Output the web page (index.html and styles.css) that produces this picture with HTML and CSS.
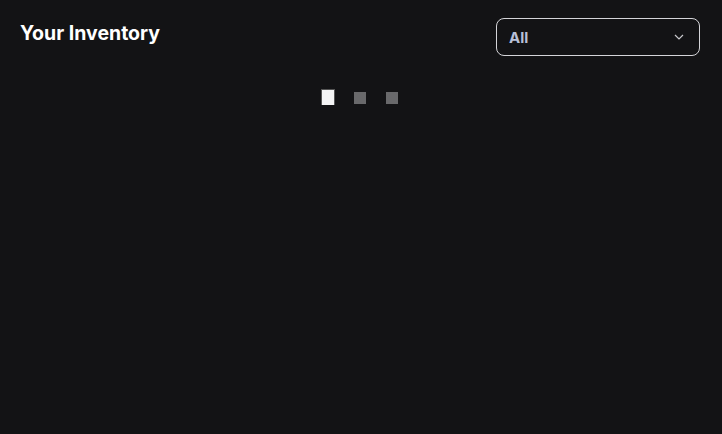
FILE: index.html
```html
<!DOCTYPE html>
<html lang="en">
<head>
  <meta charset="UTF-8">
  <title>Your Inventory</title>
  <link rel="stylesheet" href="styles.css">
</head>
<body>

  <!-- header: title + filter -->
  <div class="inv-header">
    <h1 class="inv-title">Your Inventory</h1>
    <div class="inv-select">
      <span class="inv-select-value">All</span>
      <svg class="inv-chevron" width="12" height="12" viewBox="0 0 12 12">
        <path d="M2 4 L6 8 L10 4" fill="none" stroke="#c8c8cc" stroke-width="1.2"/>
      </svg>
    </div>
  </div>

  <!-- loading indicator -->
  <div class="loader">
    <span class="loader-dot active"></span>
    <span class="loader-dot"></span>
    <span class="loader-dot"></span>
  </div>

</body>
</html>
```

FILE: styles.css
```css
/* page */
body {
  margin: 0;
  background-color: #131315;
  color: #fff;
  font-family: Inter, "Noto Sans", sans-serif;
}

.inv-header {
  display: flex;
  justify-content: space-between;
  align-items: flex-start;
  padding: 18px 22px 0 20px;
}

.inv-title {
  margin: 4px 0 0;
  font-size: 19.5px;
  font-weight: 700;
  line-height: 22px;
}

/* dropdown */
.inv-select {
  width: 204px;
  height: 38px;
  box-sizing: border-box;
  border: 1px solid #d4d4d8;
  border-radius: 8px;
  display: flex;
  align-items: center;
  justify-content: space-between;
  padding: 0 14px 0 12px;
}

.inv-select-value {
  color: #b8c0d8;
  font-size: 15px;
  font-weight: 700;
}

/* loader squares */
.loader {
  display: flex;
  justify-content: center;
  align-items: center;
  gap: 20px;
  margin-top: 34px;
  padding-right: 2px;
}

.loader-dot {
  width: 12px;
  height: 12px;
  background: #69696b;
}

.loader-dot.active {
  height: 15px;
  background: #f4f4f5;
  box-shadow: 0 0 0 1px #555;
}
```
